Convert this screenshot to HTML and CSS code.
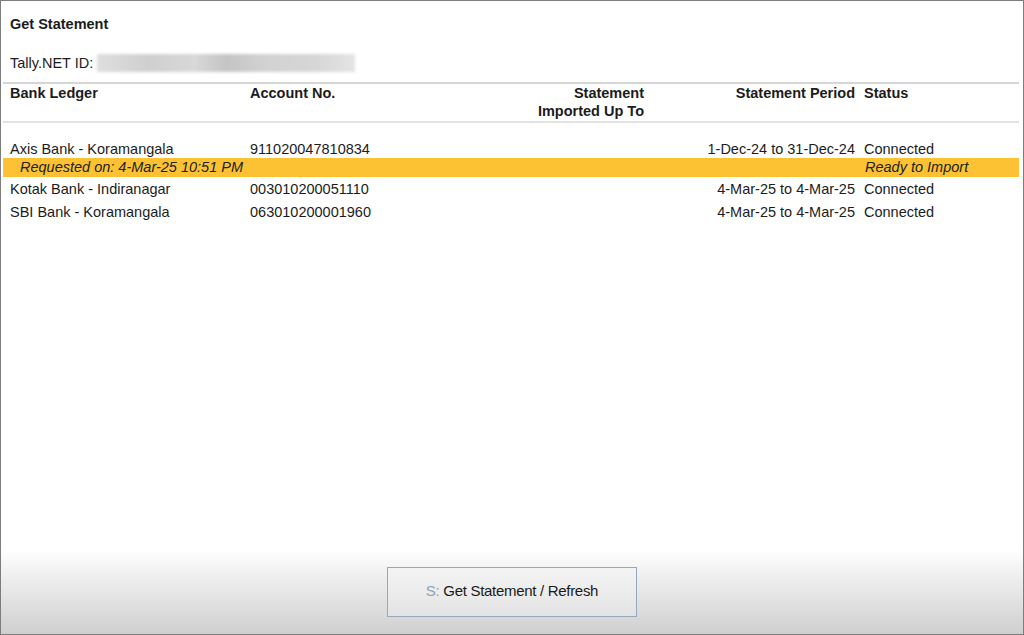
FILE: index.html
```html
<!DOCTYPE html>
<html lang="en">
<head>
<meta charset="UTF-8">
<meta name="viewport" content="width=device-width, initial-scale=1.0">
<title>Get Statement</title>
<link rel="stylesheet" href="styles.css">
</head>
<body>
<div class="window">
    <div class="content">
        <h1 class="title">Get Statement</h1>
        <div class="tally-id">
            <span>Tally.NET ID:</span>
            <span class="masked"></span>
        </div>

        <div class="table">
            <div class="row head">
                <div>Bank Ledger</div>
                <div>Account No.</div>
                <div class="num">Statement<br>Imported Up To</div>
                <div class="num">Statement Period</div>
                <div class="status">Status</div>
            </div>

            <div class="body">
                <div class="row first">
                    <div>Axis Bank - Koramangala</div>
                    <div>911020047810834</div>
                    <div class="num"></div>
                    <div class="num">1-Dec-24 to 31-Dec-24</div>
                    <div class="status">Connected</div>
                </div>
                <div class="request">
                    <div class="req-text">Requested on: 4-Mar-25 10:51 PM</div>
                    <div class="status">Ready to Import</div>
                </div>
                <div class="row">
                    <div>Kotak Bank - Indiranagar</div>
                    <div>003010200051110</div>
                    <div class="num"></div>
                    <div class="num">4-Mar-25 to 4-Mar-25</div>
                    <div class="status">Connected</div>
                </div>
                <div class="row">
                    <div>SBI Bank - Koramangala</div>
                    <div>063010200001960</div>
                    <div class="num"></div>
                    <div class="num">4-Mar-25 to 4-Mar-25</div>
                    <div class="status">Connected</div>
                </div>
            </div>
        </div>
    </div>

    <div class="footer">
        <button class="action-btn"><span class="key">S:</span> Get Statement / Refresh</button>
    </div>
</div>
</body>
</html>
```

FILE: styles.css
```css
html, body {
    margin: 0;
    padding: 0;
}
body {
    font-family: "Liberation Sans", Arial, sans-serif;
    font-size: 14.5px;
    color: #1c1c1c;
    background-color: #fff;
}
.window {
    box-sizing: border-box;
    width: 1024px;
    height: 635px;
    border: 1px solid #7d7d7d;
    display: flex;
    flex-direction: column;
    overflow: hidden;
}
.content {
    flex: 1;
}
.title {
    margin: 0;
    padding: 14px 0 0 9px;
    font-size: 14.5px;
    line-height: 18px;
    font-weight: bold;
}
.tally-id {
    display: flex;
    align-items: center;
    padding: 20px 0 0 9px;
    height: 20px;
    line-height: 18px;
}
.masked {
    display: inline-block;
    width: 258px;
    height: 18px;
    margin-left: 4px;
    background: linear-gradient(90deg, #dedede 0%, #cfcfcf 20%, #d8d8d8 38%, #c4c4c4 50%, #d2d2d2 65%, #d6d6d6 85%, #e4e4e4 100%);
    filter: blur(1.5px);
}
.table {
    margin: 9px 4px 0 2px;
}
.row {
    display: grid;
    grid-template-columns: 240px 194px 200px 211px 1fr;
    padding: 3px 0 2px 7px;
    line-height: 18px;
}
.row .num {
    text-align: right;
}
.row .status {
    padding-left: 9px;
}
.head {
    font-weight: bold;
    padding: 0 0 1px 7px;
    border-top: 2px solid #d6d6d6;
    border-bottom: 2px solid #e2e2e2;
}
.body {
    padding-top: 13px;
}
.row.first {
    padding: 4px 0 0 7px;
}
.request {
    display: grid;
    grid-template-columns: 855px 1fr;
    background-color: #fcc233;
    height: 19px;
    line-height: 19px;
    font-style: italic;
    color: #222;
}
.req-text {
    padding-left: 17px;
}
.request .status {
    padding-left: 7px;
}
.footer {
    height: 84px;
    display: flex;
    align-items: center;
    justify-content: center;
    background: linear-gradient(180deg, #ffffff 0%, #f3f3f3 22%, #e2e2e2 60%, #cfcfcf 100%);
}
.action-btn {
    width: 250px;
    height: 50px;
    padding: 0 0 3px;
    border: 1px solid #95a9bc;
    background: linear-gradient(180deg, #f4f4f4 0%, #ebebeb 55%, #e3e3e3 100%);
    font-family: "Liberation Sans", Arial, sans-serif;
    font-size: 15px;
    letter-spacing: -0.3px;
    color: #1a1a1a;
    cursor: pointer;
}
.key {
    color: #8ca3bb;
}
```
